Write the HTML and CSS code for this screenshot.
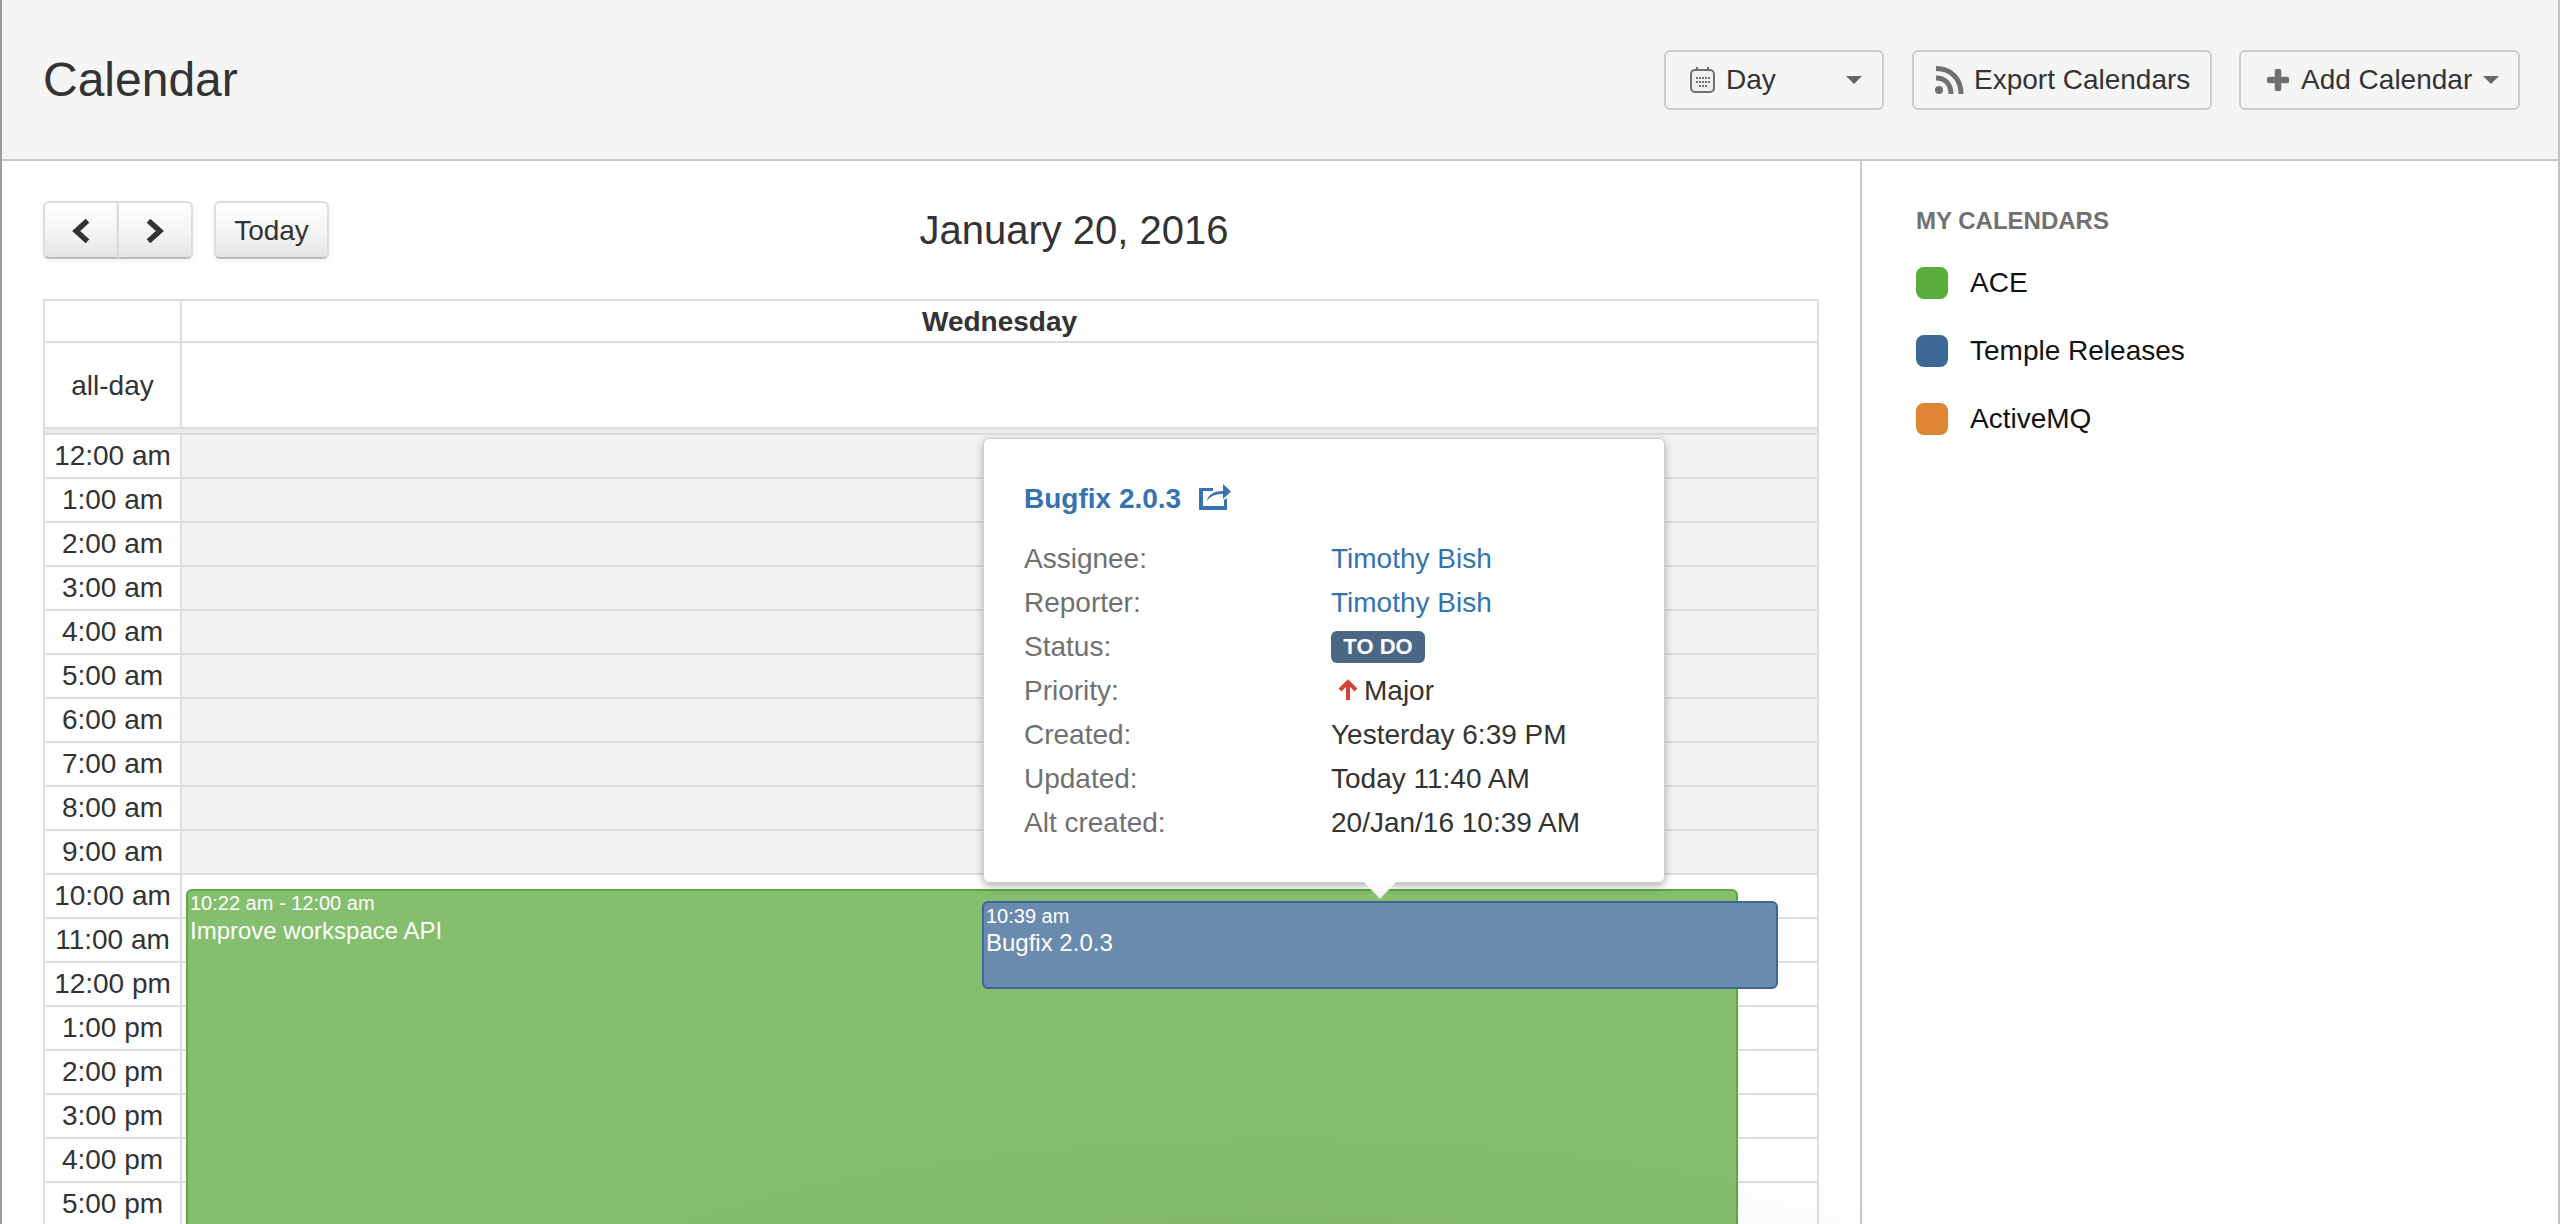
FILE: index.html
```html
<!DOCTYPE html>
<html lang="en">
<head>
<meta charset="utf-8">
<title>Calendar</title>
<link rel="stylesheet" href="styles.css">
</head>
<body>
<div class="app">
  <header class="topbar">
    <h1 class="page-title">Calendar</h1>
    <div class="actions">
      <button class="btn btn-day">
        <svg class="ico-cal" viewBox="0 0 25 26"><path d="M6 0h2v4H6zM17 0h2v4h-2z" fill="#707070"/><rect x="1" y="3" width="23" height="22" rx="4" fill="#f0f0f0" stroke="#707070" stroke-width="2"/><g fill="#707070"><rect x="6" y="10" width="2" height="2"/><rect x="9" y="10" width="2" height="2"/><rect x="12" y="10" width="2" height="2"/><rect x="15" y="10" width="2" height="2"/><rect x="18" y="10" width="2" height="2"/><rect x="6" y="14" width="2" height="2"/><rect x="9" y="14" width="2" height="2"/><rect x="12" y="14" width="2" height="2"/><rect x="15" y="14" width="2" height="2"/><rect x="18" y="14" width="2" height="2"/><rect x="9" y="18" width="2" height="2"/><rect x="12" y="18" width="2" height="2"/><rect x="15" y="18" width="2" height="2"/></g></svg>
        <span class="btn-day-label">Day</span>
        <span class="caret caret-day"></span>
      </button>
      <button class="btn btn-export">
        <svg class="ico-rss" viewBox="0 0 29 28"><circle cx="4" cy="24" r="4" fill="#707070"/><path d="M1 12c9 0 15 6 15 16" fill="none" stroke="#707070" stroke-width="5"/><path d="M1 2.500c15 0 25 10 25 25.500" fill="none" stroke="#707070" stroke-width="5"/></svg>
        <span>Export Calendars</span>
      </button>
      <button class="btn btn-add">
        <svg class="ico-plus" viewBox="0 0 22 22"><path d="M11 2.500v17M2.500 11h17" stroke="#707070" stroke-width="6.500" stroke-linecap="round"/></svg>
        <span>Add Calendar</span>
        <span class="caret"></span>
      </button>
    </div>
  </header>

  <main class="content">
    <section class="calendar">
      <div class="cal-toolbar">
        <div class="nav-group">
          <button class="nav-btn nav-prev" aria-label="Previous"><svg class="chev" viewBox="0 0 18 24"><path d="M15 2.500 4.500 12 15 21.500" fill="none" stroke="#333" stroke-width="5"/></svg></button>
          <button class="nav-btn nav-next" aria-label="Next"><svg class="chev" viewBox="0 0 18 24"><path d="M3 2.500 13.500 12 3 21.500" fill="none" stroke="#333" stroke-width="5"/></svg></button>
        </div>
        <button class="nav-btn today-btn">Today</button>
        <h2 class="cal-date">January 20, 2016</h2>
      </div>

      <div class="grid">
        <div class="row head-row"><div class="time"></div><div class="day day-head">Wednesday</div></div>
        <div class="row allday-row"><div class="time allday-label">all-day</div><div class="day"></div></div>
        <div class="band"></div>
        <div class="slots">
          <div class="row slot off"><div class="time">12:00 am</div><div class="day"></div></div>
          <div class="row slot off"><div class="time">1:00 am</div><div class="day"></div></div>
          <div class="row slot off"><div class="time">2:00 am</div><div class="day"></div></div>
          <div class="row slot off"><div class="time">3:00 am</div><div class="day"></div></div>
          <div class="row slot off"><div class="time">4:00 am</div><div class="day"></div></div>
          <div class="row slot off"><div class="time">5:00 am</div><div class="day"></div></div>
          <div class="row slot off"><div class="time">6:00 am</div><div class="day"></div></div>
          <div class="row slot off"><div class="time">7:00 am</div><div class="day"></div></div>
          <div class="row slot off"><div class="time">8:00 am</div><div class="day"></div></div>
          <div class="row slot off"><div class="time">9:00 am</div><div class="day"></div></div>
          <div class="row slot"><div class="time">10:00 am</div><div class="day"></div></div>
          <div class="row slot"><div class="time">11:00 am</div><div class="day"></div></div>
          <div class="row slot"><div class="time">12:00 pm</div><div class="day"></div></div>
          <div class="row slot"><div class="time">1:00 pm</div><div class="day"></div></div>
          <div class="row slot"><div class="time">2:00 pm</div><div class="day"></div></div>
          <div class="row slot"><div class="time">3:00 pm</div><div class="day"></div></div>
          <div class="row slot"><div class="time">4:00 pm</div><div class="day"></div></div>
          <div class="row slot"><div class="time">5:00 pm</div><div class="day"></div></div>

          <div class="event event-green">
            <div class="event-time">10:22 am - 12:00 am</div>
            <div class="event-title">Improve workspace API</div>
          </div>
          <div class="event event-blue">
            <div class="event-time">10:39 am</div>
            <div class="event-title">Bugfix 2.0.3</div>
          </div>
        </div>
      </div>
    </section>

    <aside class="sidebar">
      <h3 class="side-head">MY CALENDARS</h3>
      <ul class="cal-list">
        <li class="cal-item"><span class="swatch swatch-green"></span>ACE</li>
        <li class="cal-item"><span class="swatch swatch-blue"></span>Temple Releases</li>
        <li class="cal-item"><span class="swatch swatch-orange"></span>ActiveMQ</li>
      </ul>
    </aside>
  </main>

  <div class="popover">
    <div class="pop-title"><a class="link" href="#">Bugfix 2.0.3</a>
      <svg class="ico-share" viewBox="0 0 32 26"><path d="M0 4h14v3H4v15h21v-6l3-2v12H0z" fill="#3572b0"/><path d="M8 17c1-7 8-10 16-10V0l8 7.500-8 7.500v-5c-6 0-12 1-16 7z" fill="#3572b0"/></svg>
    </div>
    <dl class="pop-grid">
      <dt>Assignee:</dt><dd><a class="link-plain" href="#">Timothy Bish</a></dd>
      <dt>Reporter:</dt><dd><a class="link-plain" href="#">Timothy Bish</a></dd>
      <dt>Status:</dt><dd><span class="badge">TO DO</span></dd>
      <dt>Priority:</dt><dd class="priority"><svg class="ico-up" viewBox="0 0 22 22"><path d="M11 21V4M3 11l8-8 8 8" fill="none" stroke="#d04437" stroke-width="4"/></svg>Major</dd>
      <dt>Created:</dt><dd>Yesterday 6:39 PM</dd>
      <dt>Updated:</dt><dd>Today 11:40 AM</dd>
      <dt>Alt created:</dt><dd>20/Jan/16 10:39 AM</dd>
    </dl>
    <div class="pop-arrow"></div>
  </div>

  <div class="vignette"></div>
</div>
</body>
</html>
```

FILE: styles.css
```css
* { box-sizing: border-box; }
html, body { margin: 0; padding: 0; height: 1224px; overflow: hidden; background: #fff; }
body { font-family: "Liberation Sans", Arial, sans-serif; font-size: 28px; color: #333; }

.app {
  position: relative;
  height: 1224px;
  overflow: hidden;
  display: flex;
  flex-direction: column;
  border-left: 2px solid #9c9c9c;
  border-right: 2px solid #c4c4c4;
}

/* Top bar */
.topbar {
  flex: none;
  height: 161px;
  background: #f5f5f5;
  border-bottom: 2px solid #c8c8c8;
  display: flex;
  align-items: center;
  justify-content: space-between;
  padding: 0 38px 0 41px;
}
.page-title { margin: 0; font-size: 48px; font-weight: 400; line-height: 1; color: #333; }
.actions { display: flex; gap: 27px; }
.btn {
  height: 60px;
  display: flex;
  align-items: center;
  background: transparent;
  border: 2px solid #ccc;
  border-radius: 6px;
  font: inherit;
  color: #333;
  padding: 0;
}
.btn-day { width: 220px; padding: 0 20px 0 24px; margin-right: 1px; }
.btn-day-label { margin-left: 11px; }
.btn-export { width: 300px; padding-left: 21px; }
.btn-export span { margin-left: 10px; }
.btn-add { width: 281px; padding-left: 26px; }
.btn-add span:first-of-type { margin-left: 12px; }
.caret {
  display: block;
  width: 0;
  height: 0;
  margin-left: 11px;
  border-left: 8px solid transparent;
  border-right: 8px solid transparent;
  border-top: 8px solid #666;
}
.btn .caret-day { margin-left: auto; }
.ico-cal { width: 25px; height: 26px; flex: none; }
.ico-rss { width: 29px; height: 28px; flex: none; }
.ico-plus { width: 22px; height: 22px; flex: none; }

/* Layout */
.content { flex: 1; display: flex; min-height: 0; }
.calendar { width: 1858px; flex: none; padding: 40px 41px 0 41px; }
.sidebar { flex: 1; border-left: 2px solid #ccc; padding: 45px 0 0 54px; }

/* Calendar toolbar */
.cal-toolbar { display: flex; align-items: center; height: 58px; margin-bottom: 40px; }
.nav-group { display: flex; margin-right: 21px; }
.nav-btn {
  height: 58px;
  padding: 2px 0 0;
  display: flex;
  align-items: center;
  justify-content: center;
  font: inherit;
  color: #333;
  background: linear-gradient(#fff, #f4f4f4 55%, #e4e4e4);
  border: 2px solid #ddd;
  border-bottom-color: #bbb;
  border-radius: 6px;
  box-shadow: 0 2px 5px rgba(0, 0, 0, 0.06);
}
.nav-prev { width: 75px; border-radius: 6px 0 0 6px; border-right-width: 1px; }
.nav-next { width: 75px; border-radius: 0 6px 6px 0; border-left-width: 1px; }
.today-btn { width: 115px; }
.chev { width: 20px; height: 26px; }
.cal-date { flex: 1; margin: 0; text-align: center; font-size: 40px; font-weight: 400; color: #333; }

/* Grid */
.grid { border: solid #ddd; border-width: 2px 2px 0; width: 1776px; }
.row { display: grid; grid-template-columns: 137px 1fr; }
.time {
  border-right: 2px solid #ddd;
  background: #fff;
  text-align: center;
  display: flex;
  align-items: center;
  justify-content: center;
}
.head-row { height: 42px; border-bottom: 2px solid #ddd; }
.day-head { font-weight: 700; text-align: center; line-height: 38px; padding-top: 2px; }
.allday-row { height: 86px; border-bottom: 2px solid #ddd; }
.allday-label { padding-top: 2px; }
.band { height: 6px; background: #ebebeb; border-bottom: 2px solid #ddd; }
.slots { position: relative; }
.slot { height: 44px; border-bottom: 2px solid #ddd; }
.off .day { background: #f2f2f2; }

/* Events */
.event { position: absolute; color: #fff; border-radius: 6px; border: 2px solid; overflow: hidden; }
.event-green {
  left: 141px;
  top: 454px;
  width: 1552px;
  height: 900px;
  padding: 0 2px;
  background: #85be6e;
  border-color: #59ab3c;
}
.event-blue {
  left: 937px;
  top: 466px;
  width: 796px;
  height: 88px;
  padding: 1px 2px 0;
  background: #6b8bae;
  border-color: #3d6794;
}
.event-time { font-size: 20px; line-height: 24px; }
.event-title { font-size: 24px; line-height: 31px; }
.event-blue .event-title { line-height: 29px; }

/* Sidebar */
.side-head { margin: 0 0 13px; font-size: 24px; line-height: 30px; font-weight: 700; color: #707070; }
.cal-list { list-style: none; margin: 0; padding: 0; }
.cal-item { height: 68px; display: flex; align-items: center; gap: 22px; color: #111; }
.swatch { width: 32px; height: 32px; border-radius: 8px; flex: none; }
.swatch-green { background: #59ad3b; }
.swatch-blue { background: #3d6794; }
.swatch-orange { background: #e08533; }

/* Popover */
.popover {
  position: absolute;
  left: 981px;
  top: 438px;
  width: 682px;
  height: 445px;
  background: #fff;
  border: 1px solid #ccc;
  border-radius: 6px;
  box-shadow: 0 3px 8px rgba(0, 0, 0, 0.3);
  padding: 38px 40px 0;
}
.pop-title { display: flex; align-items: center; height: 44px; font-weight: 700; }
.link { color: #3572b0; text-decoration: none; }
.link-plain { color: #3572b0; text-decoration: none; }
.ico-share { width: 32px; height: 26px; margin-left: 18px; margin-top: -4px; }
.pop-grid {
  margin: 16px 0 0;
  display: grid;
  grid-template-columns: 307px 1fr;
  grid-auto-rows: 44px;
  align-items: center;
}
.pop-grid dt { color: #707070; }
.pop-grid dd { margin: 0; color: #333; }
.badge {
  display: block;
  width: 94px;
  height: 32px;
  background: #4a6785;
  border-radius: 6px;
  color: #fff;
  font-size: 22px;
  font-weight: 700;
  line-height: 32px;
  text-align: center;
}
.priority { display: flex; align-items: center; gap: 5px; padding-left: 6px; }
.ico-up { width: 22px; height: 22px; flex: none; margin-top: -3px; }
.pop-arrow {
  position: absolute;
  left: 380px;
  top: 443px;
  width: 32px;
  height: 17px;
  background: linear-gradient(#fff, #eee);
  clip-path: polygon(0 0, 100% 0, 50% 100%);
}

/* Soft shade at the bottom of the window */
.vignette {
  position: absolute;
  inset: 0;
  pointer-events: none;
  background: radial-gradient(ellipse 900px 260px at 1280px 1360px, rgba(0, 0, 0, 0.03) 45%, rgba(0, 0, 0, 0) 100%);
}
```
